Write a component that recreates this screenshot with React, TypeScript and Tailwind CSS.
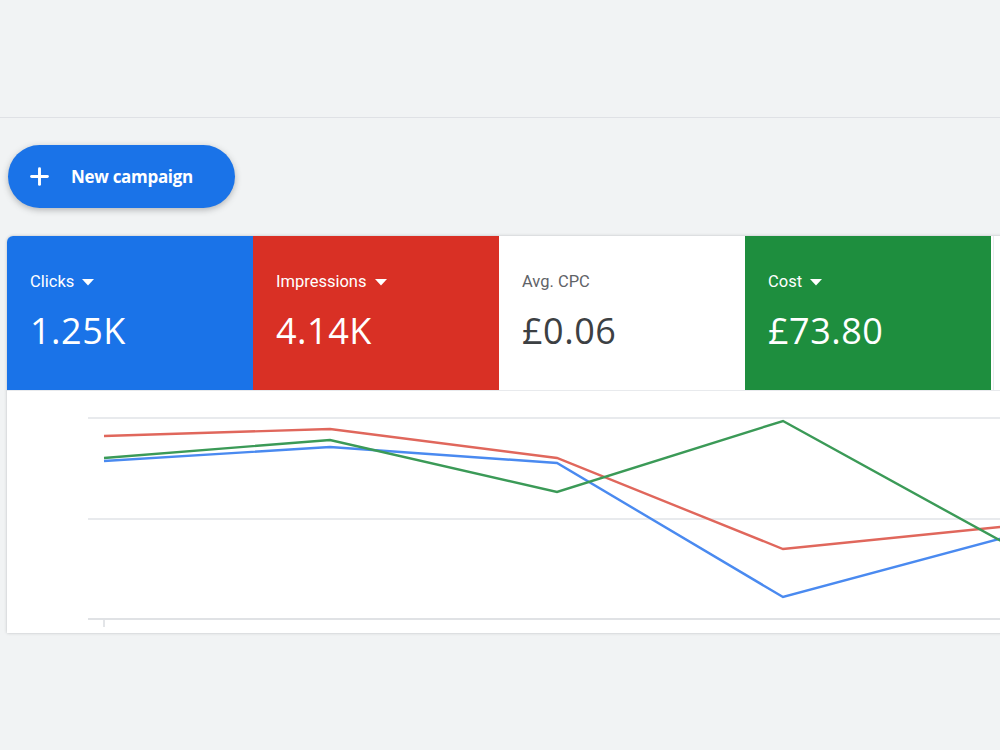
import React from "react";
import { Plus } from "lucide-react";

const Caret = () => (
  <svg width="12" height="7" viewBox="0 0 12 7" className="ml-[8px] mt-[1px]">
    <path d="M0 0 L12 0 L6 6.5 Z" fill="currentColor" />
  </svg>
);

type Tile = { label: string; value: string; bg: string; text: string; caret: boolean; sub: string };

const tiles: Tile[] = [
  { label: "Clicks", value: "1.25K", bg: "bg-[#1a73e8]", text: "text-white", caret: true, sub: "text-white" },
  { label: "Impressions", value: "4.14K", bg: "bg-[#d93025]", text: "text-white", caret: true, sub: "text-white" },
  { label: "Avg. CPC", value: "£0.06", bg: "bg-white", text: "text-[#3c4043]", caret: false, sub: "text-[#5f6368]" },
  { label: "Cost", value: "£73.80", bg: "bg-[#1e8e3e]", text: "text-white", caret: true, sub: "text-white" },
];

const ox = 7;
const oy = 392;
const pts = (arr: [number, number][]) => arr.map(([x, y]) => `${x - ox},${y - oy}`).join(" ");

export default function App() {
  return (
    <div
      className="w-[1000px] h-[750px] overflow-hidden bg-[#f1f3f4]"
      style={{ fontFamily: "Roboto, 'Open Sans', Arial, sans-serif" }}
    >
      <div className="h-[118px] border-b border-[#dfe1e5]" />
      <div className="pl-[8px] pt-[27px]">
        <button className="flex items-center w-[227px] h-[63px] rounded-full bg-[#1a73e8] text-white shadow-[0_2px_6px_rgba(60,64,67,0.35)] pl-[18px]">
          <Plus size={27} strokeWidth={2.6} />
          <span
            className="ml-[18px] text-[17px] font-bold tracking-[-0.3px]"
            style={{ fontFamily: "'Open Sans', Roboto, Arial, sans-serif" }}
          >
            New campaign
          </span>
        </button>
      </div>
      <div className="ml-[7px] mt-[28px] w-[1010px] bg-white shadow-[0_0_3px_rgba(60,64,67,0.3)] rounded-tl-[6px] overflow-hidden">
        <div className="flex h-[155px] border-b border-[#e8eaed]">
          {tiles.map((t) => (
            <div key={t.label} className={`w-[246px] shrink-0 ${t.bg} ${t.text} pl-[23px] pt-[35px] ${t.label === "Cost" ? "mr-[2px]" : ""}`}>
              <div className={`flex items-center text-[16.5px] leading-[22px] ${t.sub}`}>
                <span>{t.label}</span>
                {t.caret && <Caret />}
              </div>
              <div
                className="mt-[18px] text-[36px] leading-[40px] tracking-[0.5px] font-medium"
                style={{ fontFamily: "'Open Sans', Roboto, Arial, sans-serif" }}
              >
                {t.value}
              </div>
            </div>
          ))}
          <div className="flex-1 bg-white border-l border-[#e8eaed]" />
        </div>
        <div className="h-[242px] relative">
          <svg width="1010" height="242" className="block">
            <line x1={88 - ox} x2="1010" y1={419 - oy} y2={419 - oy} stroke="#e8eaed" strokeWidth="2" />
            <line x1={88 - ox} x2="1010" y1={520 - oy} y2={520 - oy} stroke="#e8eaed" strokeWidth="2" />
            <line x1={88 - ox} x2="1010" y1={620 - oy} y2={620 - oy} stroke="#e0e2e5" strokeWidth="2" />
            <line x1={104 - ox} x2={104 - ox} y1={621 - oy} y2={628 - oy} stroke="#dadce0" strokeWidth="1.5" />
            <polyline
              fill="none"
              stroke="#e0675c"
              strokeWidth="2.4"
              points={pts([[104, 437], [330, 430], [557, 459], [783, 550], [1010, 527]])}
            />
            <polyline
              fill="none"
              stroke="#4a8af0"
              strokeWidth="2.4"
              points={pts([[104, 462], [330, 448], [557, 464], [783, 598], [1010, 537]])}
            />
            <polyline
              fill="none"
              stroke="#3b9a57"
              strokeWidth="2.4"
              points={pts([[104, 459], [330, 441], [557, 493], [783, 422], [1010, 547]])}
            />
          </svg>
        </div>
      </div>
    </div>
  );
}
